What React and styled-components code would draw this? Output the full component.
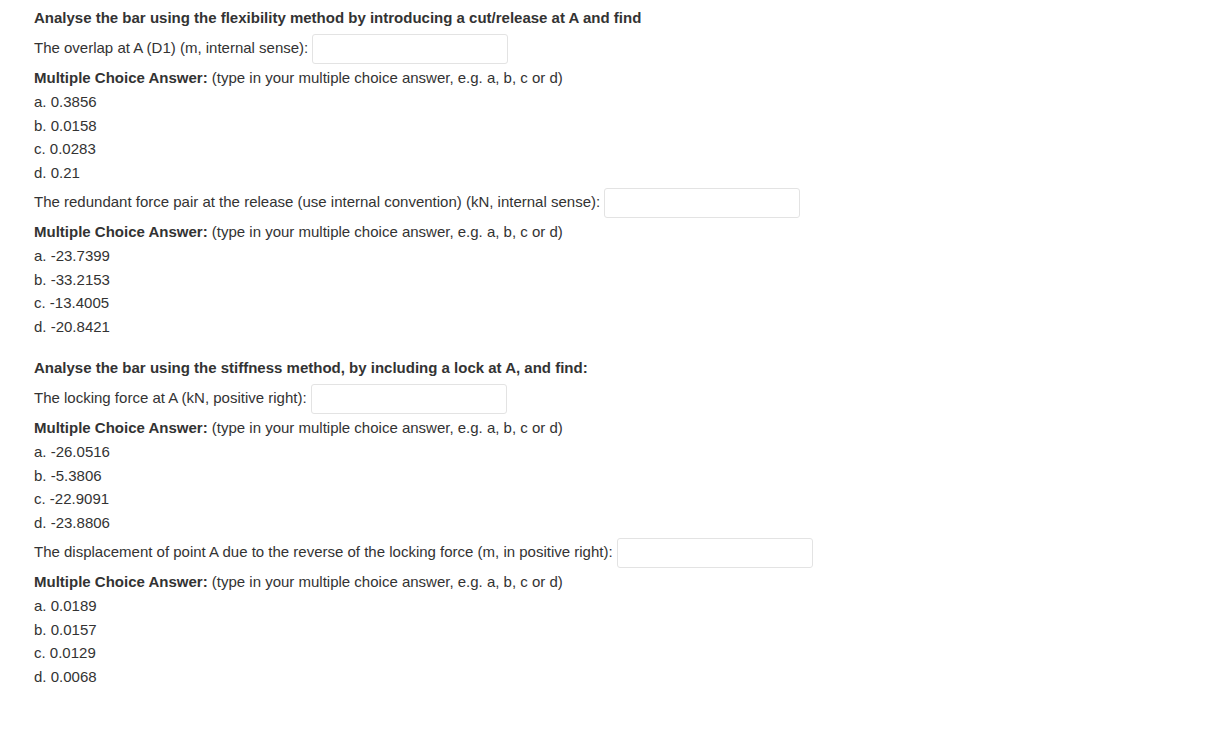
import { styled, createGlobalStyle } from "styled-components";

const GlobalStyle = createGlobalStyle`
  body {
    margin: 0;
    background: #ffffff;
    font-family: "Liberation Sans", Arial, sans-serif;
    font-size: 15px;
    color: #333333;
  }
`;

const StPage = styled.div`
  padding: 8px 34px 40px;
`;

const StSection = styled.section`
  margin-bottom: ${(props) => props.gap || "0px"};
`;

const StHeading = styled.div`
  font-weight: bold;
  line-height: 20px;
  margin-bottom: 6px;
`;

const StQuestionRow = styled.div`
  display: flex;
  align-items: center;
  line-height: 20px;
  margin-bottom: 4px;
`;

const StLabel = styled.span`
  margin-right: 4px;
  position: relative;
  top: -1px;
`;

const StInput = styled.input`
  box-sizing: border-box;
  width: 196px;
  height: 30px;
  border: 1px solid #e3e3e3;
  border-radius: 3px;
  background: #ffffff;
  padding: 4px 8px;
  font: inherit;
`;

const StChoiceTitle = styled.div`
  line-height: 20px;
  margin-bottom: 4px;
`;

const StBold = styled.b`
  font-weight: bold;
`;

const StOptions = styled.div`
  margin-bottom: ${(props) => props.after || "5px"};
`;

const StOption = styled.div`
  line-height: 20px;
  margin-bottom: 3.67px;
`;

const Question = ({ label, options, after }) => (
  <>
    <StQuestionRow>
      <StLabel>{label}</StLabel>
      <StInput type="text" />
    </StQuestionRow>
    <StChoiceTitle>
      <StBold>Multiple Choice Answer:</StBold> (type in your multiple choice
      answer, e.g. a, b, c or d)
    </StChoiceTitle>
    <StOptions after={after}>
      {options.map((opt, i) => (
        <StOption key={i}>
          {"abcd"[i]}. {opt}
        </StOption>
      ))}
    </StOptions>
  </>
);

function App() {
  return (
    <StPage>
      <GlobalStyle />
      <StSection gap="21px">
        <StHeading>
          Analyse the bar using the flexibility method by introducing a
          cut/release at A and find
        </StHeading>
        <Question
          label="The overlap at A (D1) (m, internal sense):"
          options={["0.3856", "0.0158", "0.0283", "0.21"]}
        />
        <Question
          label="The redundant force pair at the release (use internal convention) (kN, internal sense):"
          options={["-23.7399", "-33.2153", "-13.4005", "-20.8421"]}
          after="0px"
        />
      </StSection>
      <StSection>
        <StHeading>
          Analyse the bar using the stiffness method, by including a lock at A,
          and find:
        </StHeading>
        <Question
          label="The locking force at A (kN, positive right):"
          options={["-26.0516", "-5.3806", "-22.9091", "-23.8806"]}
        />
        <Question
          label="The displacement of point A due to the reverse of the locking force (m, in positive right):"
          options={["0.0189", "0.0157", "0.0129", "0.0068"]}
          after="0px"
        />
      </StSection>
    </StPage>
  );
}

export default App;
